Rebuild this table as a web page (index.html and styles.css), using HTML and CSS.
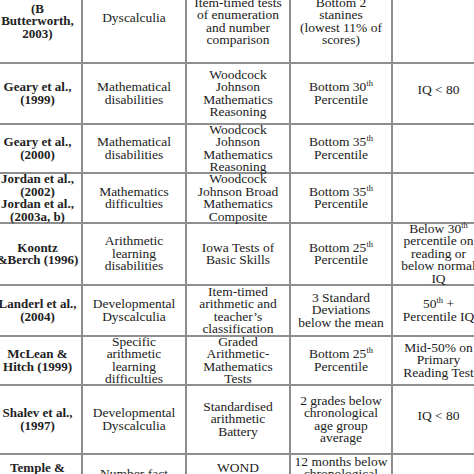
FILE: index.html
```html
<!DOCTYPE html>
<html>
<head>
<meta charset="utf-8">
<link rel="stylesheet" href="styles.css">
</head>
<body>
<div class="frame">
<table class="grid">
<colgroup>
<col class="c1"><col class="c2"><col class="c3"><col class="c4"><col class="c5">
</colgroup>
<tbody>
<tr class="r1">
<td class="au"><div class="t">(B<br>Butterworth,<br>2003)</div></td>
<td><div class="t">Dyscalculia</div></td>
<td><div class="t">Item-timed tests<br>of enumeration<br>and number<br>comparison</div></td>
<td><div class="t">Bottom 2<br>stanines<br>(lowest 11% of<br>scores)</div></td>
<td></td>
</tr>
<tr class="r2">
<td class="au"><div class="t">Geary et al.,<br>(1999)</div></td>
<td><div class="t">Mathematical<br>disabilities</div></td>
<td><div class="t">Woodcock<br>Johnson<br>Mathematics<br>Reasoning</div></td>
<td><div class="t">Bottom 30<sup>th</sup><br>Percentile</div></td>
<td><div class="t">IQ &lt; 80</div></td>
</tr>
<tr class="r3">
<td class="au"><div class="t">Geary et al.,<br>(2000)</div></td>
<td><div class="t">Mathematical<br>disabilities</div></td>
<td><div class="t">Woodcock<br>Johnson<br>Mathematics<br>Reasoning</div></td>
<td><div class="t">Bottom 35<sup>th</sup><br>Percentile</div></td>
<td></td>
</tr>
<tr class="r4">
<td class="au"><div class="t">Jordan et al.,<br>(2002)<br>Jordan et al.,<br>(2003a, b)</div></td>
<td><div class="t">Mathematics<br>difficulties</div></td>
<td><div class="t">Woodcock<br>Johnson Broad<br>Mathematics<br>Composite</div></td>
<td><div class="t">Bottom 35<sup>th</sup><br>Percentile</div></td>
<td></td>
</tr>
<tr class="r5">
<td class="au"><div class="t">Koontz<br>&amp;Berch (1996)</div></td>
<td><div class="t">Arithmetic<br>learning<br>disabilities</div></td>
<td><div class="t">Iowa Tests of<br>Basic Skills</div></td>
<td><div class="t">Bottom 25<sup>th</sup><br>Percentile</div></td>
<td><div class="t">Below 30<sup>th</sup><br>percentile on<br>reading or<br>below normal<br>IQ</div></td>
</tr>
<tr class="r6">
<td class="au"><div class="t">Landerl et al.,<br>(2004)</div></td>
<td><div class="t">Developmental<br>Dyscalculia</div></td>
<td><div class="t">Item-timed<br>arithmetic and<br>teacher’s<br>classification</div></td>
<td><div class="t">3 Standard<br>Deviations<br>below the mean</div></td>
<td><div class="t">50<sup>th</sup> +<br>Percentile IQ</div></td>
</tr>
<tr class="r7">
<td class="au"><div class="t">McLean &amp;<br>Hitch (1999)</div></td>
<td><div class="t">Specific<br>arithmetic<br>learning<br>difficulties</div></td>
<td><div class="t">Graded<br>Arithmetic-<br>Mathematics<br>Tests</div></td>
<td><div class="t">Bottom 25<sup>th</sup><br>Percentile</div></td>
<td><div class="t">Mid-50% on<br>Primary<br>Reading Test</div></td>
</tr>
<tr class="r8">
<td class="au"><div class="t">Shalev et al.,<br>(1997)</div></td>
<td><div class="t">Developmental<br>Dyscalculia</div></td>
<td><div class="t">Standardised<br>arithmetic<br>Battery</div></td>
<td><div class="t">2 grades below<br>chronological<br>age group<br>average</div></td>
<td><div class="t">IQ &lt; 80</div></td>
</tr>
<tr class="r9">
<td class="au"><div class="t">Temple &amp;<br>Sherwood<br>(2002)<br>&nbsp;</div></td>
<td><div class="t">Number fact<br>dyscalculia<br>&nbsp;</div></td>
<td><div class="t">WOND<br>Numerical<br>Operations<br>&nbsp;</div></td>
<td><div class="t">12 months below<br>chronological<br>age<br>&nbsp;<br>&nbsp;</div></td>
<td></td>
</tr>
</tbody>
</table>
</div>
</body>
</html>
```

FILE: styles.css
```css
html, body {
  margin: 0;
  padding: 0;
  background: #ffffff;
}
.frame {
  width: 474px;
  height: 474px;
  overflow: hidden;
}
.grid {
  border-collapse: collapse;
  table-layout: fixed;
  width: 492px;
  margin-left: -8px;
  margin-top: -21px;
  font-family: "Liberation Serif", "Times New Roman", serif;
  font-size: 13.5px;
  line-height: 12.5px;
  color: #222222;
}
.c1 { width: 89px; }
.c2 { width: 104px; }
.c3 { width: 104px; }
.c4 { width: 102px; }
.c5 { width: 93px; }
.grid td {
  border: 2px solid #8e8e8e;
  padding: 0;
  text-align: center;
  vertical-align: middle;
  white-space: nowrap;
}
.grid td.au {
  font-weight: bold;
  font-size: 13px;
}
.t {
  margin: -10px 0;
}
.grid sup {
  font-size: 8.5px;
  line-height: 0;
  vertical-align: 5px;
}
.r1 { height: 83px; }
.r2 { height: 61px; }
.r3 { height: 49px; }
.r4 { height: 50px; }
.r5 { height: 62px; }
.r6 { height: 51px; }
.r7 { height: 49px; }
.r8 { height: 69px; }
.r9 { height: 66px; }
```
